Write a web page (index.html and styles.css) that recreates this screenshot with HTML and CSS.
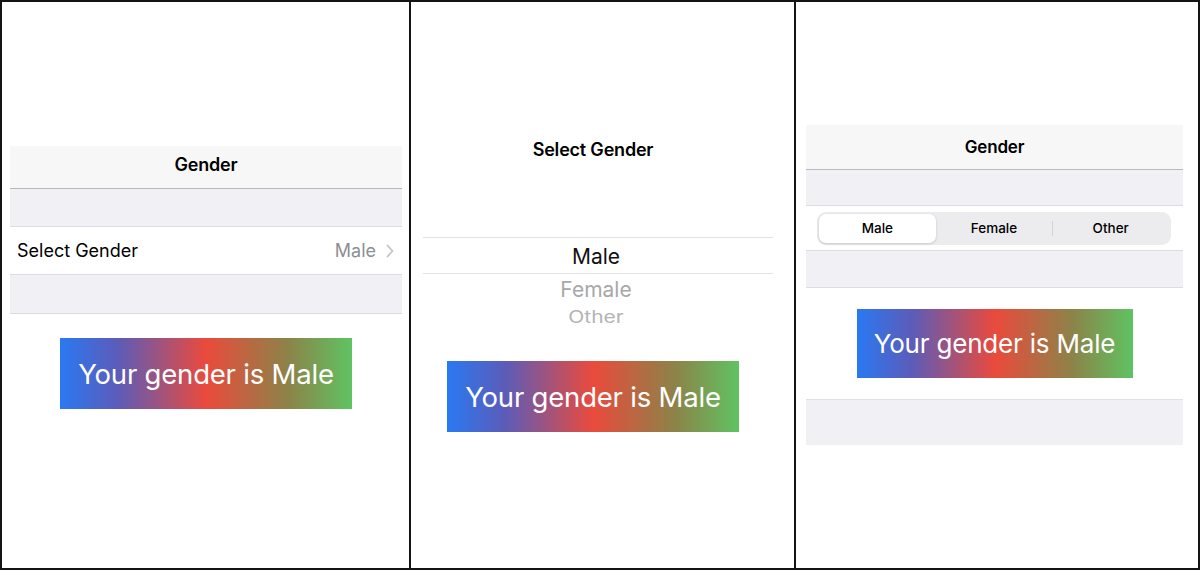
FILE: index.html
```html
<!DOCTYPE html>
<html lang="en">
	<head>
		<meta charset="UTF-8" />
		<title>Gender Picker</title>
		<meta name="viewport" content="width=device-width,initial-scale=1" />
		<link rel="stylesheet" href="styles.css">
	</head>
	<body>
		<div class="frame">
			<!-- table cell with disclosure -->
			<section class="screen screen-table">
				<header class="navbar">Gender</header>
				<div class="gap"></div>
				<div class="cell">
					<span class="cell-title">Select Gender</span>
					<span class="cell-detail">Male</span>
					<svg class="chevron" width="8" height="14" viewBox="0 0 8 14"><polyline points="1.5,1.5 6.5,7 1.5,12.5" fill="none" stroke="#c4c4c9" stroke-width="1.8" stroke-linecap="round" stroke-linejoin="round"/></svg>
				</div>
				<div class="gap gap-second"></div>
				<div class="result result-table">Your gender is Male</div>
			</section>
			<!-- wheel picker -->
			<section class="screen screen-picker">
				<h1 class="picker-title">Select Gender</h1>
				<div class="picker">
					<div class="picker-row picker-current">Male</div>
					<div class="picker-row picker-next">Female</div>
					<div class="picker-row picker-last">Other</div>
				</div>
				<div class="result result-picker">Your gender is Male</div>
			</section>
			<!-- segmented control -->
			<section class="screen screen-segment">
				<header class="navbar navbar-tall">Gender</header>
				<div class="gap gap-short"></div>
				<div class="segment-row">
					<div class="segmented">
						<span class="segment segment-on">Male</span>
						<span class="segment">Female</span>
						<span class="segment segment-split">Other</span>
					</div>
				</div>
				<div class="gap gap-mid"></div>
				<div class="result result-segment">Your gender is Male</div>
				<div class="gap gap-foot"></div>
			</section>
		</div>
	</body>
</html>
```

FILE: styles.css
```css
html,body{
	margin:0;
	padding:0;
	background:#fff;
}
body{
	font-family:Inter,"Noto Sans",sans-serif;
	color:#000;
}
.frame{
	box-sizing:border-box;
	display:flex;
	width:1200px;
	height:570px;
	border:2px solid #141414;
}
.screen{
	display:flex;
	flex-direction:column;
	box-sizing:border-box;
	background:#fff;
}
.screen-table{
	width:407px;
	padding:0 7px 0 8px;
}
.screen-picker{
	width:385px;
	padding:0 21px 0 12px;
	border-left:2px solid #141414;
}
.screen-segment{
	width:404px;
	padding:0 15px 0 10px;
	border-left:2px solid #141414;
}

/* nav bars and grouped gaps */
.navbar{
	display:flex;
	align-items:center;
	justify-content:center;
	box-sizing:border-box;
	height:43px;
	padding-bottom:5px;
	margin-top:144px;
	background:#f7f7f8;
	border-bottom:1px solid #b9b9bc;
	font-size:18px;
	font-weight:600;
	letter-spacing:-0.2px;
}
.navbar-tall{
	height:45px;
	padding-bottom:1px;
	margin-top:123px;
	font-size:17px;
}
.gap{
	height:37px;
	background:#f1f1f5;
	border-bottom:1px solid #dcdce0;
}
.gap-second{
	height:38px;
}
.gap-short{
	height:35px;
}
.gap-mid{
	height:36px;
}
.gap-foot{
	height:45px;
	margin-top:21px;
	border-top:1px solid #e2e2e6;
	border-bottom:none;
}

/* table cell */
.cell{
	display:flex;
	align-items:center;
	height:47px;
	padding:0 8px 0 7px;
	border-bottom:1px solid #dcdce0;
	font-size:18px;
}
.cell-title{
	flex:1;
}
.cell-detail{
	color:#8e8e93;
	margin-right:10px;
}

/* result banner */
.result{
	display:flex;
	align-items:center;
	justify-content:center;
	align-self:center;
	color:#fff;
	font-weight:400;
	letter-spacing:-0.2px;
	background:linear-gradient(to right,#2a79f2 0%,#5c5cb8 20%,#ea4a3c 50%,#8c8348 78%,#5fc362 100%);
}
.result-table{
	width:292px;
	height:71px;
	margin-top:24px;
	font-size:27.5px;
}
.result-picker{
	align-self:flex-start;
	width:292px;
	height:71px;
	margin:31px 0 0 24px;
	font-size:27.5px;
}
.result-segment{
	width:276px;
	height:69px;
	margin-top:21px;
	font-size:26px;
}

/* wheel picker */
.picker-title{
	margin:138px 10px 0 0;
	font-size:18px;
	font-weight:600;
	line-height:20px;
	text-align:center;
	letter-spacing:-0.2px;
}
.picker{
	margin-top:77px;
	text-align:center;
}
.picker-row{
	font-size:21px;
	padding-right:4px;
}
.picker-current{
	height:35px;
	line-height:37px;
	border-top:1px solid #e3e3e6;
	border-bottom:1px solid #e3e3e6;
	color:#111;
}
.picker-next{
	height:30px;
	line-height:32px;
	color:#a8a8aa;
}
.picker-last{
	height:26px;
	line-height:26px;
	color:#b3b3b5;
	transform:scaleY(0.8);
}

/* segmented control */
.segment-row{
	display:flex;
	align-items:center;
	height:44px;
	padding:0 12px 0 11px;
	border-bottom:1px solid #dcdce0;
}
.segmented{
	display:flex;
	flex:1;
	height:33px;
	padding:2px;
	box-sizing:border-box;
	border-radius:9px;
	background:#ececee;
}
.segment{
	flex:1;
	display:flex;
	align-items:center;
	justify-content:center;
	font-size:13.5px;
	font-weight:500;
	border-radius:7px;
	position:relative;
}
.segment-on{
	background:#fff;
	box-shadow:0 1px 3px rgba(0,0,0,0.16);
}
.segment-split::before{
	content:"";
	position:absolute;
	left:0;
	top:7px;
	bottom:7px;
	width:1px;
	background:#d4d4d8;
}
```
